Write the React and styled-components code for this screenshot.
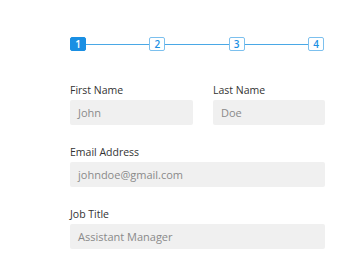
import React from "react"
import styled, { createGlobalStyle } from "styled-components"

const GlobalStyle = createGlobalStyle`
  body {
    margin: 0;
    background: #ffffff;
    font-family: "Open Sans", "Noto Sans", sans-serif;
  }
`

const colors = {
  primary: "#1a8fe3",
  stepBorder: "#7cc0ee",
  line: "#4aa8e6",
  label: "#333333",
  field: "#f0f0f0",
  placeholder: "#8a8a8a",
}

const Page = styled.div`
  width: 360px;
  height: 258px;
  padding: 37px 35px 0 70px;
  box-sizing: border-box;
`

const Stepper = styled.div`
  display: flex;
  align-items: center;
  width: 254px;
  margin-bottom: 32px;
`

const Step = styled.div`
  flex: none;
  width: 16px;
  height: 14px;
  box-sizing: border-box;
  border-radius: 2px;
  display: flex;
  align-items: center;
  justify-content: center;
  font-size: 10px;
  font-weight: 600;
  line-height: 1;
  color: ${(p) => (p.active ? "#ffffff" : colors.primary)};
  background: ${(p) => (p.active ? colors.primary : "#ffffff")};
  border: 1px solid ${(p) => (p.active ? colors.primary : colors.stepBorder)};
`

const Line = styled.div`
  flex: 1;
  height: 1px;
  background: ${colors.line};
`

const Row = styled.div`
  display: grid;
  grid-template-columns: 123px 112px;
  column-gap: 20px;
`

const Field = styled.div`
  display: flex;
  flex-direction: column;
  margin-bottom: 20px;
`

const Label = styled.label`
  font-size: 10.5px;
  line-height: 14px;
  color: ${colors.label};
  margin-bottom: 3px;
`

const Input = styled.div`
  height: 25px;
  background: ${colors.field};
  border-radius: 2px;
  padding: 0 8px;
  display: flex;
  align-items: center;
  font-size: 11px;
  color: ${colors.placeholder};
`

const steps = [1, 2, 3, 4]

export default function App() {
  return (
    <Page>
      <GlobalStyle />
      <Stepper>
        {steps.map((n, i) => (
          <React.Fragment key={n}>
            {i > 0 && <Line />}
            <Step active={n === 1}>{n}</Step>
          </React.Fragment>
        ))}
      </Stepper>
      <Row>
        <Field>
          <Label>First Name</Label>
          <Input>John</Input>
        </Field>
        <Field>
          <Label>Last Name</Label>
          <Input>Doe</Input>
        </Field>
      </Row>
      <Field>
        <Label>Email Address</Label>
        <Input>johndoe@gmail.com</Input>
      </Field>
      <Field>
        <Label>Job Title</Label>
        <Input>Assistant Manager</Input>
      </Field>
    </Page>
  )
}
